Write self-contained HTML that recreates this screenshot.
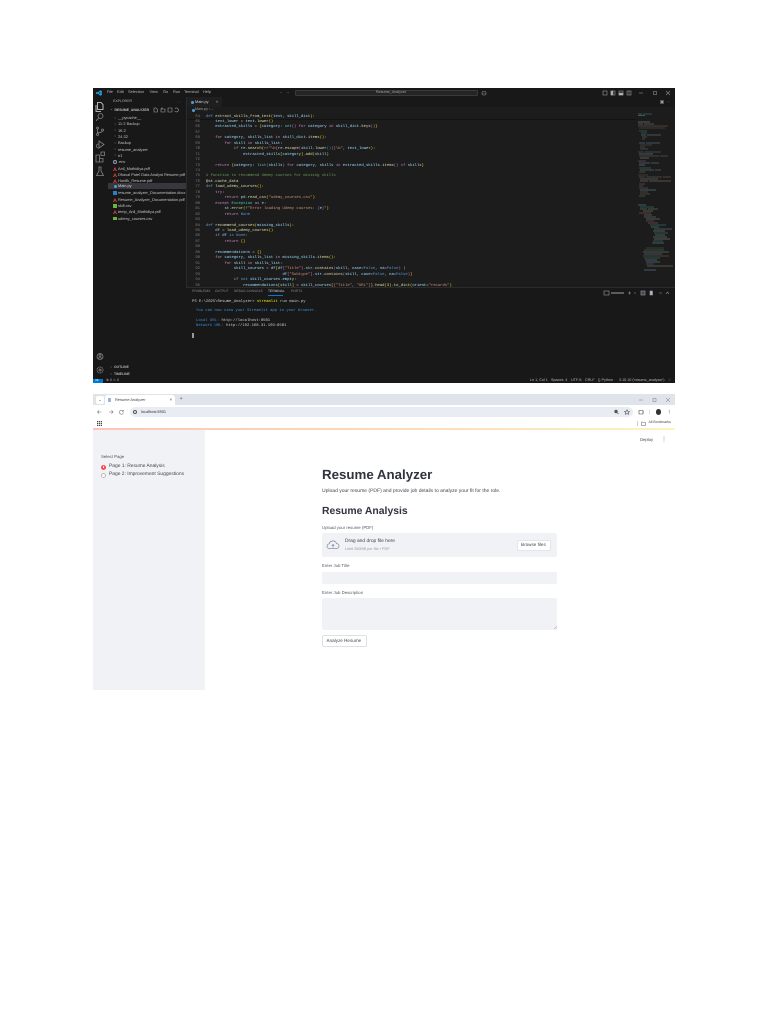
<!DOCTYPE html>
<html lang="en"><head><meta charset="utf-8"><title>Resume Analyzer</title>
<style>
html,body{margin:0;padding:0;background:#fff;width:768px;height:1024px;overflow:hidden}
*{box-sizing:border-box;text-rendering:geometricPrecision}
.a{position:absolute}
.t{position:absolute;white-space:pre;line-height:1}
body{font-family:"Liberation Sans",sans-serif}
#w{position:absolute;left:0;top:0;width:768px;height:1024px;background:#fff;filter:blur(.35px);overflow:hidden}
#code,#nums{position:absolute;font-family:"Liberation Mono",monospace;font-size:3.87px;line-height:5.46px;white-space:pre}
#code{left:206px;top:114.500px;color:#cccccc}
#nums{left:186px;width:14px;top:114.500px;text-align:right;color:#7a7a7a}
.k{color:#c586c0}.b{color:#569cd6}.f{color:#dcdcaa}.v{color:#9cdcfe}.s{color:#ce9178}.c{color:#6a9955}.g{color:#4ec9b0}.y{color:#ffd700}.p{color:#da70d6}.u{color:#179fff}
.m{font-size:3.9px;color:#b4b4b4}
.fi{font-size:3.9px;color:#c0c0c0;left:118px}
.ic{position:absolute;width:4px;height:4px}
.sb{font-size:3.7px;color:#b5b5b5;top:378.7px}
.lab{font-size:4.3px;color:#5b5d68;left:322px}
.term{position:absolute;font-family:"Liberation Mono",monospace;font-size:3.87px;white-space:pre;line-height:5px}
</style></head><body><div id="w">

<div class="a" style="left:93px;top:88px;width:582px;height:295px;background:#1c1c1c"></div>
<div class="a" style="left:93px;top:88px;width:582px;height:9px;background:#181818"></div>
<div class="a" style="left:93px;top:97px;width:14px;height:281px;background:#181818"></div>
<div class="a" style="left:107px;top:97px;width:79px;height:281px;background:#181818"></div>
<div class="a" style="left:186px;top:97px;width:489px;height:10px;background:#181818"></div>
<div class="a" style="left:186px;top:97px;width:36px;height:10px;background:#1f1f1f"></div>
<div class="a" style="left:186px;top:119px;width:450px;height:.7px;background:#131313"></div>
<div class="a" style="left:185.6px;top:97px;width:.6px;height:281px;background:#2b2b2b"></div>
<div class="a" style="left:93px;top:378px;width:582px;height:5px;background:#181818"></div>
<div class="a" style="left:93px;top:378.5px;width:10px;height:4.5px;background:#0078d4"></div>

<!-- title bar -->
<svg class="a" style="left:95.500px;top:89.500px" width="6" height="6" viewBox="0 0 24 24"><path d="M17 1l6 3v16l-6 3L7 14l-4 3-2-1V8l2-1 4 3zM17 7l-6 5 6 5z" fill="#2aa6ee"/></svg>
<span class="t m" style="left:106.700px;top:90px">File</span>
<span class="t m" style="left:117px;top:90px">Edit</span>
<span class="t m" style="left:128px;top:90px">Selection</span>
<span class="t m" style="left:149.500px;top:90px">View</span>
<span class="t m" style="left:163px;top:90px">Go</span>
<span class="t m" style="left:173px;top:90px">Run</span>
<span class="t m" style="left:184px;top:90px">Terminal</span>
<span class="t m" style="left:203px;top:90px">Help</span>
<span class="t m" style="left:279px;top:90px;color:#777">←</span>
<span class="t m" style="left:286px;top:90px;color:#777">→</span>
<div class="a" style="left:295px;top:89.500px;width:183px;height:6px;background:#242424;border:.5px solid #3a3a3a;border-radius:1.5px"></div>
<span class="t m" style="left:376px;top:90.500px;font-size:3.700px;color:#a5a5a5">Resume_Analyzer</span>
<svg class="a" style="left:481px;top:89.500px" width="6" height="6" viewBox="0 0 12 12"><rect x="2" y="3" width="8" height="7" rx="2" fill="none" stroke="#9a9a9a"/><path d="M4 6v2M8 6v2" stroke="#9a9a9a"/></svg>
<svg class="a" style="left:602px;top:89.500px" width="32" height="6" viewBox="0 0 32 6" fill="none" stroke="#9a9a9a" stroke-width=".6"><rect x="1" y="1" width="4" height="4"/><rect x="9" y="1" width="4" height="4"/><rect x="9" y="1" width="2" height="4" fill="#bbb"/><rect x="17" y="1" width="4" height="4"/><rect x="17" y="3" width="4" height="2" fill="#bbb"/><rect x="25" y="1" width="4" height="4"/><path d="M27 1v4"/></svg>
<svg class="a" style="left:638px;top:89.500px" width="34" height="6" viewBox="0 0 34 6" fill="none" stroke="#8a8a8a" stroke-width=".6"><path d="M1 3h4"/><rect x="15.500" y="1.500" width="3" height="3"/><path d="M28 1l4 4M32 1l-4 4"/></svg>

<!-- activity bar -->
<svg class="a" style="left:93px;top:97px" width="14" height="281" viewBox="0 0 14 281" fill="none" stroke="#858585" stroke-width=".8">
<path d="M4.500 5.500h3.500l2 2v5h-5.500zM3 8v6.500h5" stroke="#e0e0e0"/>
<circle cx="7.500" cy="19" r="2.500"/><path d="M5.700 21l-2.700 2.800"/>
<circle cx="4.500" cy="31" r="1"/><circle cx="4.500" cy="37.500" r="1"/><circle cx="9.500" cy="33" r="1"/><path d="M4.500 32v4.500M9.500 34c0 1.500-3 1.500-5 2"/>
<path d="M6 44v7l5-3.500zM5.500 47a2 2 0 1 0 0 4"/>
<path d="M3 58h3.500v3.500H10V65H3zM6.500 61.500V65M8 55h3.500v3.500H8z"/>
<path d="M5.500 70h3M6 70v4l-2.500 4.500h7L8 74v-4"/>
<circle cx="7" cy="259.500" r="3"/><circle cx="7" cy="258.500" r="1"/><path d="M4.800 261.500c1-1.200 3.400-1.200 4.400 0"/>
<circle cx="7" cy="273" r="3" stroke-dasharray="1.200 .5"/><circle cx="7" cy="273" r="1"/>
</svg>

<!-- explorer -->
<span class="t" style="left:113px;top:100.300px;font-size:3.500px;color:#aaa">EXPLORER</span>
<span class="t" style="left:177px;top:99.500px;font-size:4px;color:#888">···</span>
<span class="t" style="left:110px;top:108.300px;font-size:3.500px;color:#bbb">⌄</span>
<span class="t" style="left:114.500px;top:108.500px;font-size:3.400px;font-weight:700;color:#c4c4c4">RESUME_ANALYZER</span>
<svg class="a" style="left:153px;top:107px" width="28" height="6" viewBox="0 0 28 6" fill="none" stroke="#a0a0a0" stroke-width=".6"><path d="M1 1h2l1.500 1.500V5H1zM8 2h4v3H8zM8 2l.5-1h1.500M15 1h4v4h-4zM22 1.500a2 2 0 1 1-.3 2.500"/></svg>

<div class="a" style="left:108px;top:183px;width:77.500px;height:6.300px;background:#37373d"></div>

<span class="t" style="left:114.500px;top:116.500px;font-size:3.500px;color:#aaa">›</span><span class="t fi" style="top:116px">__pycache__</span>
<span class="t" style="left:114.500px;top:122.800px;font-size:3.500px;color:#aaa">›</span><span class="t fi" style="top:122.300px">11-2 Backup</span>
<span class="t" style="left:114.500px;top:129px;font-size:3.500px;color:#aaa">›</span><span class="t fi" style="top:128.500px">16-2</span>
<span class="t" style="left:114.500px;top:135.300px;font-size:3.500px;color:#aaa">›</span><span class="t fi" style="top:134.800px">24-32</span>
<span class="t" style="left:114.500px;top:141.600px;font-size:3.500px;color:#aaa">›</span><span class="t fi" style="top:141.200px">Backup</span>
<span class="t" style="left:114.500px;top:148px;font-size:3.500px;color:#aaa">›</span><span class="t fi" style="top:147.500px">resume_analyzer</span>
<span class="t" style="left:114.500px;top:154.300px;font-size:3.500px;color:#aaa">›</span><span class="t fi" style="top:153.800px">tr1</span>

<div class="ic" style="left:113px;top:160.300px;border:.8px solid #8fa0ad;border-radius:50%"></div><span class="t fi" style="top:160.200px">.env</span>
<svg class="ic" style="left:113px;top:166.500px" viewBox="0 0 8 8"><path d="M4 0l4 8H6L4 4 2 8H0z" fill="#e0403a"/></svg><span class="t fi" style="top:166.500px">Anil_Mothidiya.pdf</span>
<svg class="ic" style="left:113px;top:172.800px" viewBox="0 0 8 8"><path d="M4 0l4 8H6L4 4 2 8H0z" fill="#e0403a"/></svg><span class="t fi" style="top:172.800px">Dhaval Patel Data Analyst Resume.pdf</span>
<svg class="ic" style="left:113px;top:179px" viewBox="0 0 8 8"><path d="M4 0l4 8H6L4 4 2 8H0z" fill="#e0403a"/></svg><span class="t fi" style="top:179px">Hardik_Resume.pdf</span>
<div class="ic" style="left:113.500px;top:184.500px;width:3px;height:3px;background:#4a9fd8;border-radius:50%"></div><span class="t fi" style="top:184.300px;color:#d8d8d8">Main.py</span>
<div class="ic" style="left:113px;top:191.300px;width:3.500px;height:3.500px;background:#2d7fc4"></div><span class="t fi" style="top:191.200px">resume_analyzer_Documentation.docx</span>
<svg class="ic" style="left:113px;top:197.800px" viewBox="0 0 8 8"><path d="M4 0l4 8H6L4 4 2 8H0z" fill="#e0403a"/></svg><span class="t fi" style="top:197.800px">Resume_Analyzer_Documentation.pdf</span>
<div class="ic" style="left:113px;top:204.200px;width:3.500px;height:3.500px;background:#6cb33f"></div><span class="t fi" style="top:204.100px">skill.csv</span>
<svg class="ic" style="left:113px;top:210.400px" viewBox="0 0 8 8"><path d="M4 0l4 8H6L4 4 2 8H0z" fill="#e0403a"/></svg><span class="t fi" style="top:210.400px">temp_Anil_Mothidiya.pdf</span>
<div class="ic" style="left:113px;top:216.700px;width:3.500px;height:3.500px;background:#6cb33f"></div><span class="t fi" style="top:216.600px">udemy_courses.csv</span>

<span class="t" style="left:110.500px;top:366px;font-size:3.500px;color:#aaa">›</span><span class="t" style="left:114px;top:366px;font-size:3.400px;font-weight:700;color:#b5b5b5">OUTLINE</span>
<span class="t" style="left:110.500px;top:372.800px;font-size:3.500px;color:#aaa">›</span><span class="t" style="left:114px;top:372.800px;font-size:3.400px;font-weight:700;color:#b5b5b5">TIMELINE</span>

<!-- tabs -->
<div class="a" style="left:191px;top:100.500px;width:3px;height:3px;background:#4a9fd8;border-radius:50%"></div>
<span class="t" style="left:195px;top:100.200px;font-size:3.900px;color:#d0d0d0">Main.py</span>
<span class="t" style="left:216px;top:100px;font-size:4px;color:#c0c0c0">×</span>
<div class="a" style="left:659.500px;top:100px;width:4px;height:4px;background:#a0a0a0;border:.5px solid #555"></div>
<span class="t" style="left:666.500px;top:100px;font-size:4px;color:#999">···</span>
<div class="a" style="left:191.500px;top:108.500px;width:3px;height:3px;background:#4a9fd8;border-radius:50%"></div>
<span class="t" style="left:195px;top:108.300px;font-size:3.700px;color:#a0a0a0">Main.py › ...</span>

<!-- code -->
<div id="nums">64
65
66
67
68
69
70
71
72
73
74
75
76
77
78
79
80
81
82
83
84
85
86
87
88
89
90
91
92
93
94
95</div>
<div id="code"><span class="b">def</span> <span class="f">extract_skills_from_text</span><span class="y">(</span><span class="v">text, skill_dict</span><span class="y">)</span>:
    <span class="v">text_lower</span> = <span class="v">text</span>.<span class="f">lower</span><span class="y">()</span>
    <span class="v">extracted_skills</span> = <span class="y">{</span><span class="v">category</span>: <span class="g">set</span><span class="p">()</span> <span class="k">for</span> <span class="v">category</span> <span class="k">in</span> <span class="v">skill_dict</span>.<span class="f">keys</span><span class="p">()</span><span class="y">}</span>

    <span class="k">for</span> <span class="v">category, skills_list</span> <span class="k">in</span> <span class="v">skill_dict</span>.<span class="f">items</span><span class="y">()</span>:
        <span class="k">for</span> <span class="v">skill</span> <span class="k">in</span> <span class="v">skills_list</span>:
            <span class="k">if</span> <span class="v">re</span>.<span class="f">search</span><span class="y">(</span><span class="b">r</span><span class="s">r"\b{</span><span class="v">re</span>.<span class="f">escape</span><span class="p">(</span><span class="v">skill</span>.<span class="f">lower</span><span class="u">()</span><span class="p">)</span><span class="s">}\b"</span>, <span class="v">text_lower</span><span class="y">)</span>:
                <span class="v">extracted_skills</span><span class="y">[</span><span class="v">category</span><span class="y">]</span>.<span class="f">add</span><span class="y">(</span><span class="v">skill</span><span class="y">)</span>

    <span class="k">return</span> <span class="y">{</span><span class="v">category</span>: <span class="g">list</span><span class="p">(</span><span class="v">skills</span><span class="p">)</span> <span class="k">for</span> <span class="v">category, skills</span> <span class="k">in</span> <span class="v">extracted_skills</span>.<span class="f">items</span><span class="p">()</span> <span class="k">if</span> <span class="v">skills</span><span class="y">}</span>

<span class="c"># Function to recommend Udemy courses for missing skills</span>
<span class="f">@st</span>.<span class="f">cache_data</span>
<span class="b">def</span> <span class="f">load_udemy_courses</span><span class="y">()</span>:
    <span class="k">try</span>:
        <span class="k">return</span> <span class="v">pd</span>.<span class="f">read_csv</span><span class="y">(</span><span class="s">"udemy_courses.csv"</span><span class="y">)</span>
    <span class="k">except</span> <span class="g">Exception</span> <span class="k">as</span> <span class="v">e</span>:
        <span class="v">st</span>.<span class="f">error</span><span class="y">(</span><span class="b">f</span><span class="s">"Error loading Udemy courses: </span><span class="b">{</span><span class="v">e</span><span class="b">}</span><span class="s">"</span><span class="y">)</span>
        <span class="k">return</span> <span class="b">None</span>

<span class="b">def</span> <span class="f">recommend_courses</span><span class="y">(</span><span class="v">missing_skills</span><span class="y">)</span>:
    <span class="v">df</span> = <span class="f">load_udemy_courses</span><span class="y">()</span>
    <span class="k">if</span> <span class="v">df</span> <span class="b">is</span> <span class="b">None</span>:
        <span class="k">return</span> <span class="y">{}</span>

    <span class="v">recommendations</span> = <span class="y">{}</span>
    <span class="k">for</span> <span class="v">category, skills_list</span> <span class="k">in</span> <span class="v">missing_skills</span>.<span class="f">items</span><span class="y">()</span>:
        <span class="k">for</span> <span class="v">skill</span> <span class="k">in</span> <span class="v">skills_list</span>:
            <span class="v">skill_courses</span> = <span class="v">df</span><span class="y">[</span><span class="v">df</span><span class="p">[</span><span class="s">"Title"</span><span class="p">]</span>.<span class="v">str</span>.<span class="f">contains</span><span class="p">(</span><span class="v">skill</span>, <span class="v">case</span>=<span class="b">False</span>, <span class="v">na</span>=<span class="b">False</span><span class="p">)</span> |
                                 <span class="v">df</span><span class="p">[</span><span class="s">"Subtype"</span><span class="p">]</span>.<span class="v">str</span>.<span class="f">contains</span><span class="p">(</span><span class="v">skill</span>, <span class="v">case</span>=<span class="b">False</span>, <span class="v">na</span>=<span class="b">False</span><span class="p">)</span><span class="y">]</span>
            <span class="k">if</span> <span class="b">not</span> <span class="v">skill_courses</span>.<span class="v">empty</span>:
                <span class="v">recommendations</span><span class="y">[</span><span class="v">skill</span><span class="y">]</span> = <span class="v">skill_courses</span><span class="y">[</span><span class="p">[</span><span class="s">"Title"</span>, <span class="s">"URL"</span><span class="p">]</span><span class="y">]</span>.<span class="f">head</span><span class="y">(</span>3<span class="y">)</span>.<span class="f">to_dict</span><span class="y">(</span><span class="v">orient</span>=<span class="s">"records"</span><span class="y">)</span></div>

<!-- minimap -->
<svg class="a" style="left:636px;top:113px" width="38" height="160" viewBox="0 0 38 160" fill="none" stroke-width=".55" opacity=".6">
<path d="M2 1h4M2 2.500h7" stroke="#9cdcfe"/><path d="M7 1h9" stroke="#4ec9b0"/>
<path d="M2 9h12" stroke="#dcdcaa"/><path d="M2 11h5M8 11h10" stroke="#9cdcfe"/><path d="M2 13h18M20 13h12" stroke="#ce9178"/><path d="M3 15h26" stroke="#9c8a70"/>
<path d="M3 18h8M5 20h6" stroke="#4ec9b0"/><path d="M5 22h5M11 22h14" stroke="#9cdcfe"/><path d="M6 24h5" stroke="#ce9178"/><path d="M6 26h3" stroke="#c586c0"/>
<path d="M3 30h6M10 30h14" stroke="#9cdcfe"/><path d="M4 32h12" stroke="#6a9955"/><path d="M4 34h5M4 36h8" stroke="#c586c0"/>
<path d="M2 39h6M9 39h16" stroke="#4ec9b0"/><path d="M3 41h14" stroke="#9cdcfe"/><path d="M3 43h20M24 43h8" stroke="#ce9178"/><path d="M4 45h9" stroke="#dcdcaa"/>
<path d="M2 48h8" stroke="#c586c0"/><path d="M3 50h11M15 50h8" stroke="#9cdcfe"/><path d="M3 52h6" stroke="#dcdcaa"/>
<path d="M3 55h12" stroke="#4ec9b0"/><path d="M4 57h14M19 57h6" stroke="#9cdcfe"/><path d="M3 59h6" stroke="#ce9178"/>
<path d="M2 62h10" stroke="#6a9955"/><path d="M3 64h6M10 64h16M27 64h8" stroke="#ce9178"/><path d="M4 66h18" stroke="#9cdcfe"/><path d="M4 68h8M13 68h22" stroke="#dcdcaa"/>
<path d="M3 71h6" stroke="#c586c0"/><path d="M3 73h4M3 75h9" stroke="#ce9178"/><path d="M4 77h16" stroke="#9cdcfe"/><path d="M4 79h8M4 81h10" stroke="#ce9178"/><path d="M3 83h6" stroke="#4ec9b0"/>
<path d="M2 92h8" stroke="#9cdcfe"/><path d="M4 94h14" stroke="#4ec9b0"/><path d="M4 96h7M12 96h10" stroke="#dcdcaa"/><path d="M7 98h10" stroke="#9cdcfe"/><path d="M3 100h12" stroke="#ce9178"/>
<path d="M8 102h8M8 104h12" stroke="#dcdcaa"/><path d="M10 106h14" stroke="#9cdcfe"/><path d="M10 108h8" stroke="#c586c0"/><path d="M12 110h10" stroke="#ce9178"/>
<path d="M14 112h16" stroke="#4ec9b0"/><path d="M15 114h8" stroke="#9cdcfe"/><path d="M18 116h18" stroke="#9cdcfe"/><path d="M17 118h12" stroke="#dcdcaa"/><path d="M18 120h14" stroke="#4ec9b0"/><path d="M19 122h10" stroke="#9cdcfe"/>
<path d="M17 124h14" stroke="#9cdcfe"/><path d="M18 126h16" stroke="#dcdcaa"/><path d="M17 128h10" stroke="#4ec9b0"/><path d="M16 130h12" stroke="#9cdcfe"/>
<path d="M10 135h18" stroke="#6a9955"/><path d="M8 137h20" stroke="#4ec9b0"/><path d="M7 139h26" stroke="#dcdcaa"/><path d="M8 141h18" stroke="#9cdcfe"/><path d="M7 143h26" stroke="#ce9178"/>
<path d="M8 145h16" stroke="#4ec9b0"/><path d="M9 147h12" stroke="#9cdcfe"/><path d="M10 149h14" stroke="#9cdcfe"/><path d="M10 151h8" stroke="#c586c0"/><path d="M11 153h26" stroke="#dcdcaa"/><path d="M8 157h12" stroke="#9cdcfe"/>
</svg>

<!-- panel -->
<div class="a" style="left:186px;top:287px;width:489px;height:91px;background:#181818;border-top:.7px solid #2c2c2c"></div>
<span class="t" style="left:192px;top:290.400px;font-size:3.300px;color:#8a8a8a">PROBLEMS</span>
<span class="t" style="left:215px;top:290.400px;font-size:3.300px;color:#8a8a8a">OUTPUT</span>
<span class="t" style="left:234px;top:290.400px;font-size:3.300px;color:#8a8a8a">DEBUG CONSOLE</span>
<span class="t" style="left:268px;top:290.400px;font-size:3.300px;color:#d0d0d0">TERMINAL</span>
<div class="a" style="left:268px;top:295px;width:15px;height:.6px;background:#0078d4"></div>
<span class="t" style="left:291px;top:290.400px;font-size:3.300px;color:#8a8a8a">PORTS</span>
<svg class="a" style="left:603px;top:289.500px" width="70" height="6" viewBox="0 0 70 6" fill="none" stroke="#9a9a9a" stroke-width=".6"><rect x="1" y="1" width="5" height="4"/><path d="M8 3h13" stroke="#8a8a8a" stroke-width="1.200"/><path d="M25 3h3M26.500 1.500v3M31 3h2"/><rect x="38" y="1" width="4" height="4" fill="#445"/><rect x="47" y="1" width="2.500" height="4" fill="#c8a8d8"/><path d="M56 3h3M63 4l1.500-2 1.500 2"/></svg>

<div class="term" style="left:192px;top:299.800px;color:#ccc">PS E:\2025\Resume_Analyzer> <span style="color:#e5e510">streamlit</span> run main.py</div>
<div class="term" style="left:196px;top:309px;color:#3b8ed8">You can now view your Streamlit app in your browser.</div>
<div class="term" style="left:196px;top:319px;color:#3b8ed8">Local URL: <span style="color:#ccc">http://localhost:8501</span></div>
<div class="term" style="left:196px;top:324px;color:#3b8ed8">Network URL: <span style="color:#ccc">http://192.168.31.169:8501</span></div>
<div class="a" style="left:191.500px;top:332.500px;width:2.500px;height:5.500px;border:.5px solid #9a9a9a"></div>

<!-- status bar -->
<span class="t" style="left:95px;top:379px;font-size:3.500px;color:#fff">⋊</span>
<span class="t" style="left:106px;top:379px;font-size:3.500px;color:#aaa">⊗ 0 ⚠ 0</span>
<span class="t sb" style="left:530px">Ln 1, Col 1</span>
<span class="t sb" style="left:551px">Spaces: 4</span>
<span class="t sb" style="left:571px">UTF-8</span>
<span class="t sb" style="left:585px">CRLF</span>
<span class="t sb" style="left:598px">{} Python</span>
<span class="t sb" style="left:619px">3.10.10 ('resume_analyzer')</span>
<span class="t sb" style="left:668px">♢</span>

<!-- browser -->
<div class="a" style="left:93px;top:394px;width:582px;height:11px;background:#dfe3ea"></div>
<div class="a" style="left:96px;top:395.500px;width:8px;height:8px;background:#fff;border-radius:2px"></div>
<span class="t" style="left:98.300px;top:397.800px;font-size:4px;color:#444">⌄</span>
<div class="a" style="left:105px;top:394.500px;width:70px;height:10.500px;background:#fff;border-radius:3px 3px 0 0"></div>
<div class="a" style="left:108px;top:397.500px;width:3px;height:4px;background:#9db4d8"></div>
<span class="t" style="left:115px;top:398.200px;font-size:3.900px;color:#444">Resume Analyzer</span>
<span class="t" style="left:169.500px;top:397.500px;font-size:4.500px;color:#555">×</span>
<span class="t" style="left:179.500px;top:397px;font-size:5.500px;color:#555">+</span>
<svg class="a" style="left:638px;top:397px" width="34" height="6" viewBox="0 0 34 6" fill="none" stroke="#777" stroke-width=".5"><path d="M1 3h4"/><rect x="15" y="1.500" width="3" height="3"/><path d="M28 1l4 4M32 1l-4 4"/></svg>

<div class="a" style="left:93px;top:405px;width:582px;height:23px;background:#fff"></div>
<svg class="a" style="left:96px;top:409px" width="30" height="6" viewBox="0 0 30 6" fill="none" stroke="#777" stroke-width=".6"><path d="M5.500 3H1.500M3 1.500L1.500 3 3 4.500M13 3h4M15.500 1.500L17 3l-1.500 1.500"/><path d="M27 2a2 2 0 1 0 .4 1.500M27.300 1v1.300H26"/></svg>
<div class="a" style="left:130px;top:407px;width:503px;height:10px;background:#e9edf3;border-radius:5px"></div>
<div class="a" style="left:133px;top:410px;width:4px;height:4px;border:.6px solid #555;border-radius:50%"></div>
<span class="t" style="left:141px;top:410px;font-size:3.900px;color:#333">localhost:8501</span>
<svg class="a" style="left:613px;top:409px" width="18" height="6" viewBox="0 0 18 6" fill="none" stroke="#555" stroke-width=".6"><circle cx="3" cy="2.500" r="1.400" fill="#555"/><path d="M4 3.500L5.500 5"/><path d="M14 .8l.8 1.500 1.700.2-1.200 1.200.3 1.600-1.600-.8-1.600.8.3-1.600-1.200-1.200 1.700-.2z"/></svg>
<svg class="a" style="left:638px;top:409px" width="34" height="6" viewBox="0 0 34 6" fill="none" stroke="#444" stroke-width=".6"><path d="M1 1.500h4v3.500H1z"/><path d="M5 3h1"/><path d="M11.500 .5v5" stroke="#ccc"/></svg>
<div class="a" style="left:655.500px;top:409px;width:5.500px;height:5.500px;background:#333;border-radius:50%"></div>
<span class="t" style="left:667px;top:409.500px;font-size:4.500px;font-weight:700;color:#555">⋮</span>
<svg class="a" style="left:96.500px;top:420.500px" width="5" height="5" viewBox="0 0 5 5" fill="#444"><rect width="1.200" height="1.200"/><rect x="1.900" width="1.200" height="1.200"/><rect x="3.800" width="1.200" height="1.200"/><rect y="1.900" width="1.200" height="1.200"/><rect x="1.900" y="1.900" width="1.200" height="1.200"/><rect x="3.800" y="1.900" width="1.200" height="1.200"/><rect y="3.800" width="1.200" height="1.200"/><rect x="1.900" y="3.800" width="1.200" height="1.200"/><rect x="3.800" y="3.800" width="1.200" height="1.200"/></svg>
<div class="a" style="left:637px;top:420.500px;width:.5px;height:5px;background:#ccc"></div>
<svg class="a" style="left:641px;top:420.500px" width="5" height="5" viewBox="0 0 5 5" fill="none" stroke="#555" stroke-width=".5"><path d="M.5 1h1.500l.5.5h2v3h-4z"/></svg>
<span class="t" style="left:648.500px;top:421px;font-size:3.500px;color:#444">All Bookmarks</span>
<div class="a" style="left:93px;top:428px;width:582px;height:2px;background:linear-gradient(90deg,#fbc4b8,#fcd9bc 50%,#fdf3c0)"></div>

<!-- streamlit -->
<div class="a" style="left:93px;top:430px;width:112px;height:260px;background:#f0f2f6"></div>
<span class="t" style="left:101px;top:455.300px;font-size:4.300px;color:#55575f">Select Page</span>
<div class="a" style="left:101px;top:464.500px;width:5px;height:5px;background:#ff4b4b;border-radius:50%"></div>
<div class="a" style="left:102.800px;top:466.300px;width:1.400px;height:1.400px;background:#fff;border-radius:50%"></div>
<span class="t" style="left:109px;top:464.800px;font-size:4.900px;color:#44464f">Page 1: Resume Analysis</span>
<div class="a" style="left:101px;top:473px;width:5px;height:5px;background:#fff;border:.5px solid #bbb;border-radius:50%"></div>
<span class="t" style="left:109px;top:473.300px;font-size:4.900px;color:#44464f">Page 2: Improvement Suggestions</span>

<span class="t" style="left:640px;top:438.300px;font-size:4.200px;color:#44464f">Deploy</span>
<span class="t" style="left:661px;top:437px;font-size:6px;color:#44464f">⋮</span>

<span class="t" style="left:322px;top:467.500px;font-size:13.300px;font-weight:700;color:#31333f">Resume Analyzer</span>
<span class="t" style="left:322px;top:488.500px;font-size:5px;color:#44464f">Upload your resume (PDF) and provide job details to analyze your fit for the role.</span>
<span class="t" style="left:322px;top:506.500px;font-size:10.400px;font-weight:700;color:#31333f">Resume Analysis</span>

<span class="t lab" style="top:525.800px">Upload your resume (PDF)</span>
<div class="a" style="left:322px;top:532.700px;width:235px;height:24.600px;background:#f0f2f6;border-radius:2px"></div>
<svg class="a" style="left:326px;top:540px" width="14" height="10" viewBox="0 0 14 10" fill="none" stroke="#8b90a8" stroke-width=".8"><path d="M3.500 8.500a2.300 2.300 0 0 1-.3-4.600A3.800 3.800 0 0 1 10.500 3.500a2.500 2.500 0 0 1 0 5z"/><path d="M7 7.500v-3M5.800 5.700L7 4.500l1.200 1.200"/></svg>
<span class="t" style="left:345px;top:539.500px;font-size:4.900px;color:#44464f">Drag and drop file here</span>
<span class="t" style="left:345px;top:548px;font-size:3.800px;color:#9a9ca6">Limit 200MB per file • PDF</span>
<div class="a" style="left:516.700px;top:540px;width:34.300px;height:11.300px;background:#fff;border:.5px solid #e4e5ea;border-radius:2px"></div>
<span class="t" style="left:521px;top:543.300px;font-size:4.600px;color:#44464f">Browse files</span>

<span class="t lab" style="top:564.300px">Enter Job Title</span>
<div class="a" style="left:322px;top:571.700px;width:235px;height:12.500px;background:#f0f2f6;border-radius:2px"></div>
<span class="t lab" style="top:590.800px">Enter Job Description</span>
<div class="a" style="left:322px;top:598px;width:235px;height:31.700px;background:#f0f2f6;border-radius:2px"></div>
<svg class="a" style="left:553.500px;top:626px" width="3" height="3" viewBox="0 0 3 3" stroke="#888" stroke-width=".4"><path d="M0 3L3 0M1.500 3L3 1.500"/></svg>
<div class="a" style="left:322px;top:635px;width:45px;height:12.300px;background:#fff;border:.5px solid #dfe0e5;border-radius:2px"></div>
<span class="t" style="left:326.500px;top:638.700px;font-size:4.600px;color:#44464f">Analyze Resume</span>

</div></body></html>
